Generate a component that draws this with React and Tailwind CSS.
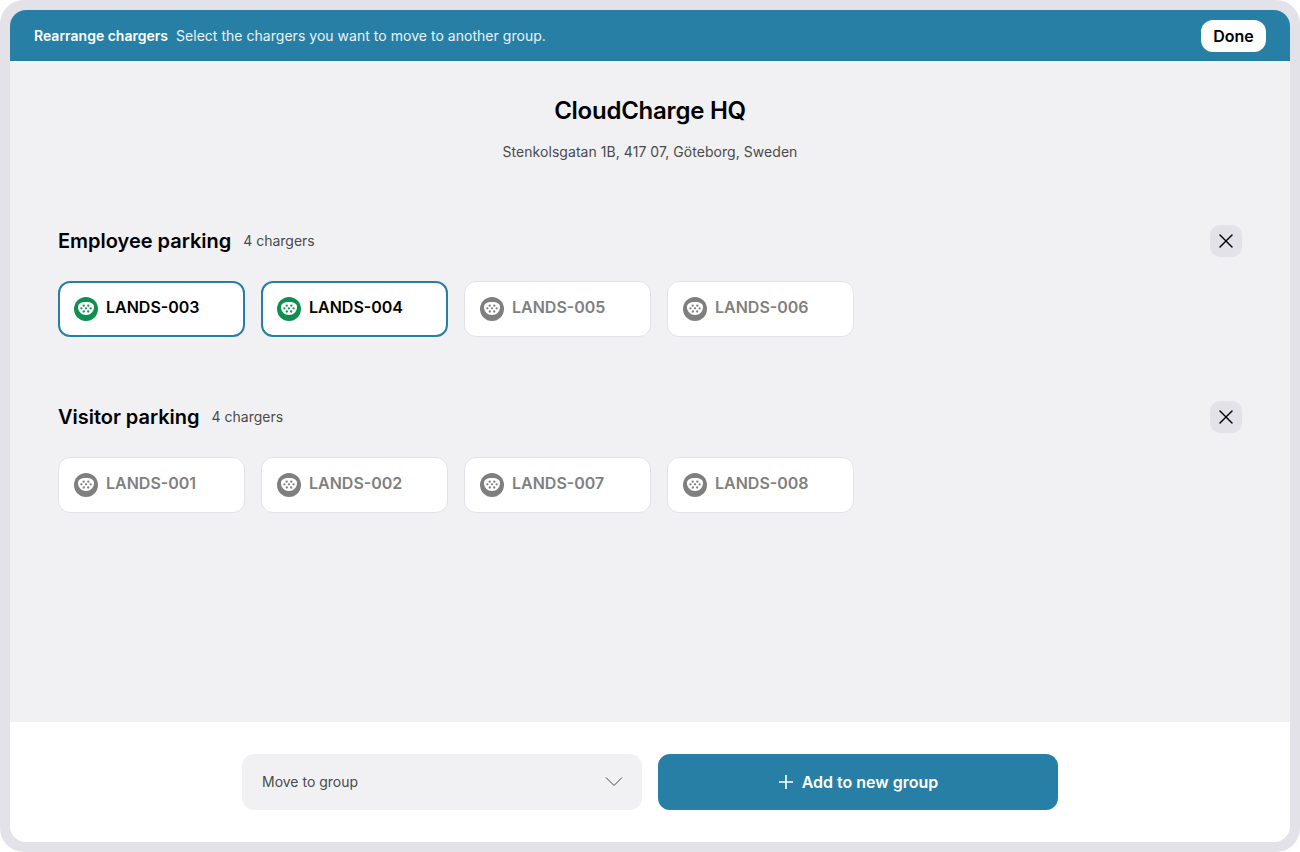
import { X } from "lucide-react";

const ChargerIcon = ({ active }) => {
  const color = active ? "#0f8f4f" : "#7f7f7f";
  return (
    <svg width="24" height="24" viewBox="0 0 24 24" className="shrink-0">
      <circle cx="12" cy="12" r="12" fill={color} />
      <path
        d="M12 5c5 0 8 1.500 8 5 0 4.500-3.600 8-8 8s-8-3.500-8-8c0-3.500 3-5 8-5z"
        fill="white"
      />
      <g fill={color}>
        <circle cx="9.700" cy="8.700" r="1.150" />
        <circle cx="14.300" cy="8.700" r="1.150" />
        <circle cx="7.400" cy="11.300" r="1.150" />
        <circle cx="12" cy="11.300" r="1.150" />
        <circle cx="16.600" cy="11.300" r="1.150" />
        <circle cx="9.800" cy="14.500" r="1.150" />
        <circle cx="14.200" cy="14.500" r="1.150" />
      </g>
    </svg>
  );
};

const Charger = ({ name, selected }) => (
  <div
    className={
      selected
        ? "flex h-14 w-[187px] items-center gap-2 rounded-xl border-2 border-[#277fa6] bg-white pl-[14px]"
        : "flex h-14 w-[187px] items-center gap-2 rounded-xl border border-[#e2e2e8] bg-white pl-[15px]"
    }
  >
    <ChargerIcon active={selected} />
    <span
      className={`mb-1 text-base leading-6 font-semibold ${
        selected ? "text-black" : "text-[#7f7f7f]"
      }`}
    >
      {name}
    </span>
  </div>
);

const Group = ({ title, chargers, selected = [] }) => (
  <section>
    <div className="flex h-8 items-center justify-between">
      <div className="flex items-center gap-3">
        <h2 className="text-xl leading-8 font-semibold tracking-[-0.02px] text-black">{title}</h2>
        <span className="text-sm text-[#4a4a4a]">{chargers.length} chargers</span>
      </div>
      <button className="flex size-8 items-center justify-center rounded-[10px] bg-[#e2e2e8]">
        <X size={24} strokeWidth={1.4} className="text-black" />
      </button>
    </div>
    <div className="mt-6 flex gap-4">
      {chargers.map((c) => (
        <Charger key={c} name={c} selected={selected.includes(c)} />
      ))}
    </div>
  </section>
);

export default function App() {
  return (
    <div className="h-[852px] w-[1300px] bg-white font-['Inter',sans-serif]">
      <div className="h-full rounded-[24px] bg-[#e2e2e8] p-2.5">
        <div className="flex h-[832px] flex-col overflow-hidden rounded-2xl bg-[#f1f1f4]">
          <header className="flex h-[51px] shrink-0 items-center justify-between bg-[#277fa6] px-6">
            <div className="flex items-center gap-2 text-sm tracking-[0.03px] text-white">
              <span className="font-semibold tracking-normal">Rearrange chargers</span>
              <span className="text-white/90">Select the chargers you want to move to another group.</span>
            </div>
            <button className="flex h-8 w-[65px] items-center justify-center rounded-xl bg-white text-base font-semibold text-black">
              Done
            </button>
          </header>

          <main className="flex-1 px-12">
            <div className="flex flex-col items-center pt-[34px]">
              <h1 className="text-2xl leading-8 font-semibold tracking-[-0.24px] text-black">CloudCharge HQ</h1>
              <p className="mt-[15px] text-sm leading-5 tracking-[0.05px] text-[#4a4a4a]">
                Stenkolsgatan 1B, 417 07, Göteborg, Sweden
              </p>
            </div>
            <div className="mt-[63px] flex flex-col gap-[64px]">
              <Group
                title="Employee parking"
                chargers={["LANDS-003", "LANDS-004", "LANDS-005", "LANDS-006"]}
                selected={["LANDS-003", "LANDS-004"]}
              />
              <Group
                title="Visitor parking"
                chargers={["LANDS-001", "LANDS-002", "LANDS-007", "LANDS-008"]}
              />
            </div>
          </main>

          <footer className="flex h-[120px] shrink-0 items-center justify-center gap-4 bg-white">
            <div className="flex h-14 w-[400px] items-center justify-between rounded-xl bg-[#f1f1f4] pr-[18px] pl-5">
              <span className="text-sm text-[#4a4a4a]">Move to group</span>
              <svg width="20" height="20" viewBox="0 0 20 20" fill="none" stroke="#4a4a4a" strokeWidth="1">
                <path d="M2 5.500l8 8 8-8" />
              </svg>
            </div>
            <button className="flex h-14 w-[400px] items-center justify-center gap-2 rounded-xl bg-[#277fa6] text-base font-semibold text-white">
              <svg width="16" height="16" viewBox="0 0 16 16" fill="none" stroke="white" strokeWidth="1.6">
                <path d="M8 1v14M1 8h14" />
              </svg>
              Add to new group
            </button>
          </footer>
        </div>
      </div>
    </div>
  );
}
